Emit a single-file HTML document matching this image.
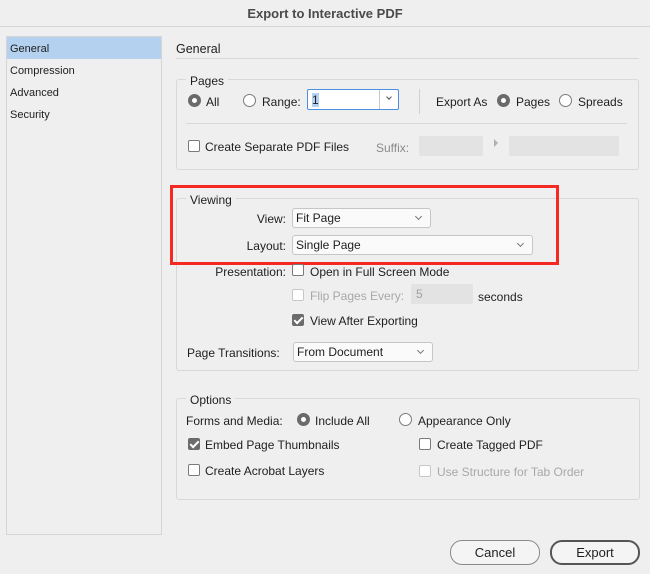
<!DOCTYPE html>
<html><head><meta charset="utf-8"><style>
*{box-sizing:border-box;margin:0;padding:0}
body{width:650px;height:574px;background:#efefef;font-family:"Liberation Sans",sans-serif;font-size:12px;color:#1e1e1e;position:relative;overflow:hidden}
.a{position:absolute;white-space:nowrap}
.t{line-height:14px;margin-top:1px}
.grp{position:absolute;border:1px solid #d8d8d8;border-radius:3px}
.lg{position:absolute;background:#efefef;padding:0 4px;line-height:14px;margin-top:1px}
.rad{position:absolute;width:13px;height:13px;border-radius:50%;border:1px solid #7a7a7a;background:#fff}
.rad.on{background:#fff;border:4px solid #6a6a6a}
.cb{position:absolute;width:12px;height:12px;border:1px solid #7a7a7a;border-radius:2px;background:#fff}
.cb.on{background:#6b6b6b;border-color:#6b6b6b}
.cb.on:after{content:"";position:absolute;left:3px;top:0px;width:3px;height:7px;border:solid #fff;border-width:0 2px 2px 0;transform:rotate(45deg)}
.cb.dis{border-color:#c8c8c8}
.sel{position:absolute;height:20px;border:1px solid #c6c6c6;border-radius:3px;background:#fafafa;padding-left:3px;line-height:18px}
.sel:after{content:"";position:absolute;right:9px;top:5px;width:4px;height:4px;border:solid #777;border-width:0 1px 1px 0;transform:rotate(45deg)}
.gray{color:#a8a8a8}
.box{position:absolute;background:#e3e3e3;border-radius:2px}
.btn{position:absolute;height:25px;border:1px solid #8a8a8a;border-radius:12px;text-align:center;line-height:23px;font-size:13px;background:#f4f4f4}
</style></head><body>
<div class="a" style="left:0;top:0;width:650px;height:27px;border-bottom:1px solid #d6d6d6;text-align:center;line-height:27px;font-weight:bold;font-size:13px;color:#4a4a4a">Export to Interactive PDF</div>

<div class="a" style="left:6px;top:36px;width:156px;height:499px;border:1px solid #d6d6d6"></div>
<div class="a" style="left:7px;top:37px;width:154px;height:22px;background:#b4d2ef"></div>
<div class="a t" style="left:10px;top:41px;font-size:11px">General</div>
<div class="a t" style="left:10px;top:63px;font-size:11px">Compression</div>
<div class="a t" style="left:10px;top:85px;font-size:11px">Advanced</div>
<div class="a t" style="left:10px;top:107px;font-size:11px">Security</div>

<div class="a t" style="left:176px;top:41px;font-size:12.5px">General</div>
<div class="a" style="left:176px;top:58px;width:463px;height:1px;background:#d8d8d8"></div>

<div class="grp" style="left:176px;top:79px;width:463px;height:91px"></div>
<div class="lg" style="left:186px;top:73px">Pages</div>
<div class="rad on" style="left:188px;top:94px"></div><div class="a t" style="left:206px;top:94px">All</div>
<div class="rad" style="left:243px;top:94px"></div><div class="a t" style="left:262px;top:94px">Range:</div>
<div class="a" style="left:307px;top:89px;width:92px;height:21px;border:1px solid #4a8fe0;border-radius:2px;background:#fff"><span style="position:absolute;left:4px;top:3px;background:#b4d2ef;line-height:14px">1</span><span style="position:absolute;left:71px;top:0;width:1px;height:19px;background:#c8c8c8"></span><span style="position:absolute;left:79px;top:5px;width:4px;height:4px;border:solid #555;border-width:0 1px 1px 0;transform:rotate(45deg)"></span></div>
<div class="a" style="left:419px;top:89px;width:1px;height:25px;background:#d0d0d0"></div>
<div class="a t" style="left:436px;top:94px">Export As</div>
<div class="rad on" style="left:497px;top:94px"></div><div class="a t" style="left:516px;top:94px">Pages</div>
<div class="rad" style="left:559px;top:94px"></div><div class="a t" style="left:578px;top:94px">Spreads</div>
<div class="a" style="left:186px;top:123px;width:441px;height:1px;background:#d8d8d8"></div>
<div class="cb" style="left:188px;top:140px"></div><div class="a t" style="left:205px;top:139px">Create Separate PDF Files</div>
<div class="a t gray" style="left:376px;top:140px;color:#8a8a8a">Suffix:</div>
<div class="box" style="left:419px;top:136px;width:64px;height:20px"></div>
<div class="a" style="left:494px;top:139px;width:0;height:0;border-left:4px solid #b0b0b0;border-top:4px solid transparent;border-bottom:4px solid transparent"></div>
<div class="box" style="left:509px;top:136px;width:110px;height:20px"></div>

<div class="grp" style="left:176px;top:198px;width:463px;height:173px"></div>
<div class="lg" style="left:186px;top:192px">Viewing</div>
<div class="a t" style="left:200px;top:211px;width:86px;text-align:right">View:</div>
<div class="sel" style="left:292px;top:208px;width:139px">Fit Page</div>
<div class="a t" style="left:200px;top:238px;width:86px;text-align:right">Layout:</div>
<div class="sel" style="left:292px;top:235px;width:241px">Single Page</div>
<div class="a" style="left:170px;top:185px;width:389px;height:80px;border:3px solid #f42a22"></div>
<div class="a t" style="left:190px;top:264px;width:96px;text-align:right">Presentation:</div>
<div class="cb" style="left:292px;top:264px"></div><div class="a t" style="left:310px;top:264px">Open in Full Screen Mode</div>
<div class="cb dis" style="left:292px;top:289px"></div><div class="a t gray" style="left:310px;top:288px">Flip Pages Every:</div>
<div class="box" style="left:411px;top:284px;width:62px;height:20px"><span style="position:absolute;left:5px;top:3px;line-height:14px;color:#a0a0a0">5</span></div>
<div class="a t" style="left:478px;top:289px">seconds</div>
<div class="cb on" style="left:292px;top:314px"></div><div class="a t" style="left:310px;top:313px">View After Exporting</div>
<div class="a t" style="left:187px;top:345px">Page Transitions:</div>
<div class="sel" style="left:293px;top:342px;width:140px">From Document</div>

<div class="grp" style="left:176px;top:398px;width:464px;height:102px"></div>
<div class="lg" style="left:186px;top:392px">Options</div>
<div class="a t" style="left:186px;top:413px">Forms and Media:</div>
<div class="rad on" style="left:297px;top:413px"></div><div class="a t" style="left:315px;top:413px">Include All</div>
<div class="rad" style="left:399px;top:413px"></div><div class="a t" style="left:418px;top:413px">Appearance Only</div>
<div class="cb on" style="left:188px;top:438px"></div><div class="a t" style="left:205px;top:437px">Embed Page Thumbnails</div>
<div class="cb" style="left:419px;top:438px"></div><div class="a t" style="left:437px;top:437px">Create Tagged PDF</div>
<div class="cb" style="left:188px;top:464px"></div><div class="a t" style="left:205px;top:463px">Create Acrobat Layers</div>
<div class="cb dis" style="left:419px;top:465px"></div><div class="a t gray" style="left:437px;top:464px">Use Structure for Tab Order</div>

<div class="btn" style="left:450px;top:540px;width:90px">Cancel</div>
<div class="btn" style="left:550px;top:540px;width:90px;border:2px solid #555;line-height:21px">Export</div>
</body></html>
